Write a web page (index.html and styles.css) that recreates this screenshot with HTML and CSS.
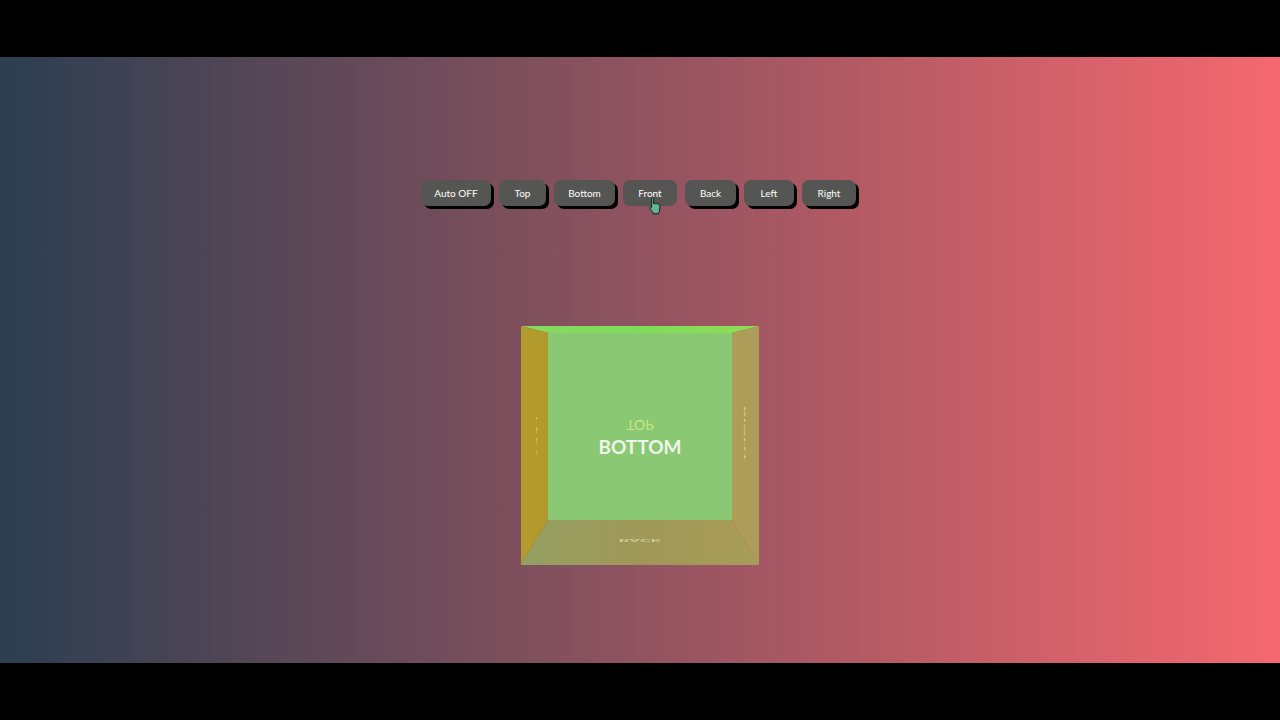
FILE: index.html
```html
<!DOCTYPE html>
<html lang="en">
<head>
    <meta charset="UTF-8">
    <meta name="viewport" content="width=device-width, initial-scale=1.0">
    <title>CSS Cube</title>
    <link rel="stylesheet" href="styles.css">
</head>
<body>
    <div class="stage">
        <div class="controls">
            <button class="btn" type="button">Auto OFF</button>
            <button class="btn" type="button">Top</button>
            <button class="btn" type="button">Bottom</button>
            <button class="btn btn-active" type="button">Front
                <svg class="cursor" width="14" height="18" viewBox="0 0 14 18">
                    <path d="M3.6 1.6c0-1.2 2-1.2 2 0v5.2l.6-.3c.5-.3 1.100-.2 1.400.2.500-.3 1.200-.2 1.500.3.500-.3 1.200-.1 1.400.4.500-.2 1.300.1 1.300.9v3.700c0 1.600-.5 2.600-1.100 3.600v1.200H5v-1.200c-1-1.200-2.100-2.700-3.300-4.500-.5-.8.300-1.700 1.100-1.200l.8.6z" fill="#62b596" stroke="#14211d" stroke-width="1"/>
                </svg>
            </button>
            <button class="btn" type="button">Back</button>
            <button class="btn" type="button">Left</button>
            <button class="btn" type="button">Right</button>
        </div>
        <svg class="cube" width="240" height="240" viewBox="0 0 240 240">
            <defs>
                <linearGradient id="topFace" x1="0" x2="1" y1="0" y2="0">
                    <stop offset="0" stop-color="#86d960"/>
                    <stop offset="0.5" stop-color="#7fdc5a"/>
                    <stop offset="1" stop-color="#8fdc58"/>
                </linearGradient>
                <linearGradient id="bottomFace" x1="0" x2="1" y1="0" y2="0">
                    <stop offset="0" stop-color="#93a062"/>
                    <stop offset="0.5" stop-color="#a09858"/>
                    <stop offset="1" stop-color="#a89c58"/>
                </linearGradient>
            </defs>
            <polygon points="28,8 212,8 239,1 1,1" fill="url(#topFace)"/>
            <polygon points="1,1 28,8 28,195 1,240" fill="#b39a2d"/>
            <polygon points="239,1 212,8 212,195 239,240" fill="#ad9d58"/>
            <polygon points="28,195 212,195 239,240 1,240" fill="url(#bottomFace)"/>
            <rect x="28" y="8" width="184" height="187" fill="#8bc873"/>
            <text class="face-text" transform="translate(16,113) rotate(90) scale(1.05,0.12)" fill="#dcd66e" font-size="13" font-weight="700" letter-spacing="3" text-anchor="middle">LEFT</text>
            <text class="face-text" transform="translate(224,109) rotate(90) scale(1.45,0.12)" fill="#e6e08c" font-size="13" font-weight="700" text-anchor="middle">RIGHT</text>
            <text class="face-text" transform="translate(120,214) scale(1.25,-0.32)" fill="#d4dca0" font-size="13" text-anchor="middle">BACK</text>
            <text class="face-text" transform="translate(120,95) scale(1,-1)" fill="#c9e67e" font-size="14" text-anchor="middle">TOP</text>
            <text class="face-text" x="120" y="129" fill="#eef6ea" font-size="19" font-weight="700" text-anchor="middle">BOTTOM</text>
        </svg>
    </div>
</body>
</html>
```

FILE: styles.css
```css
body {
    margin: 0;
    background-color: #000;
    font-family: Lato, "Liberation Sans", sans-serif;
}
.stage {
    height: 606px;
    margin: 57px 0;
    padding-top: 123px;
    box-sizing: border-box;
    display: flex;
    flex-direction: column;
    align-items: center;
    background: linear-gradient(to right, #2c3e50, #f5686f);
}
.controls {
    display: grid;
    grid-template-columns: 70px 47px 61px 54px 51px 50px 54px;
    gap: 8px;
    padding-right: 3px;
}
.btn {
    position: relative;
    height: 26px;
    padding: 0;
    border: none;
    border-radius: 7px;
    background-color: #555654;
    color: #fff;
    font-family: inherit;
    font-size: 10px;
    box-shadow: 3px 3px 0 #000;
}
.btn-active {
    box-shadow: none;
}
.cursor {
    position: absolute;
    left: 25px;
    top: 17px;
}
.cube {
    margin-top: 119px;
}
.face-text {
    font-family: Lato, "Liberation Sans", sans-serif;
}
```
